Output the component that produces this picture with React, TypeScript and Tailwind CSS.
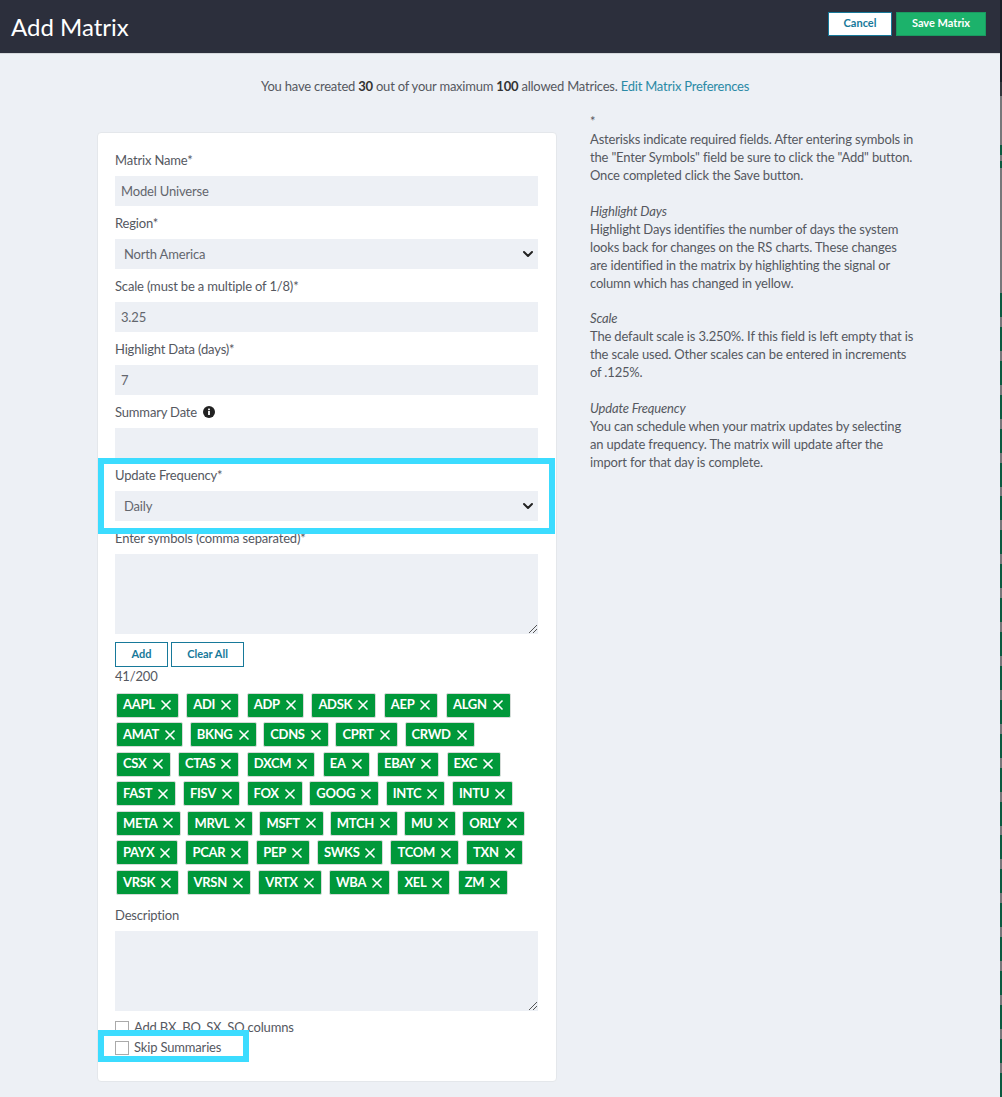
import React from 'react';
import { ChevronDown, X } from 'lucide-react';

const symbolRows = [
  { gap: 'gap-[7.6px]', items: ['AAPL', 'ADI', 'ADP', 'ADSK', 'AEP', 'ALGN'] },
  { gap: 'gap-[6.75px]', items: ['AMAT', 'BKNG', 'CDNS', 'CPRT', 'CRWD'] },
  { gap: 'gap-[7.4px]', items: ['CSX', 'CTAS', 'DXCM', 'EA', 'EBAY', 'EXC'] },
  { gap: 'gap-[6.6px]', items: ['FAST', 'FISV', 'FOX', 'GOOG', 'INTC', 'INTU'] },
  { gap: 'gap-[6px]', items: ['META', 'MRVL', 'MSFT', 'MTCH', 'MU', 'ORLY'] },
  { gap: 'gap-[7px]', items: ['PAYX', 'PCAR', 'PEP', 'SWKS', 'TCOM', 'TXN'] },
  { gap: 'gap-[7.3px]', items: ['VRSK', 'VRSN', 'VRTX', 'WBA', 'XEL', 'ZM'] },
];

function Field({ label, value, select }: { label: React.ReactNode; value?: string; select?: boolean }) {
  return (
    <div className="mb-[9px]">
      <div className="h-[16px] leading-[16px] mb-[8px]">{label}</div>
      <div className={`h-[30px] bg-[#edf0f5] flex items-center justify-between text-[#63666d] ${select ? 'pl-[9px] pr-[2px]' : 'pl-[6px]'}`}>
        <span className="pt-[2px]">{value}</span>
        {select && <ChevronDown size={16} strokeWidth={3} className="text-[#222]" />}
      </div>
    </div>
  );
}

function Chip({ name }: { name: string }) {
  return (
    <span className="h-[25px] pl-[6px] pr-[4px] bg-[#00983a] border border-[#d5dbd8] rounded-[2px] flex items-center gap-[3px] text-white font-bold tracking-[-0.3px]">
      {name}
      <X size={16} strokeWidth={2.5} />
    </span>
  );
}

function Help({ title, children }: { title: string; children: React.ReactNode }) {
  return (
    <div className="mb-[17.5px]">
      <div className="italic">{title}</div>
      <p>{children}</p>
    </div>
  );
}

function ResizeGrip() {
  return (
    <svg className="absolute right-0 bottom-0" width="10" height="10" viewBox="0 0 10 10" stroke="#555" fill="none">
      <path d="M1 9 L9 1 M5 9 L9 5" />
    </svg>
  );
}

export default function App() {
  return (
    <div className="relative w-[1002px] h-[1097px] overflow-hidden bg-[#edf0f5] text-[#55585f] text-[13px] tracking-[-0.17px] font-['Lato',sans-serif]">
      <header className="h-[54px] bg-[#2c2f3c] flex items-center justify-between pl-[11px] pr-[16px] border-b border-[#d5d8dc] tracking-normal">
        <h1 className="text-[24px] text-white">Add Matrix</h1>
        <div className="flex gap-[4px] -mt-[6px]">
          <button className="w-[64px] h-[24px] bg-white border border-[#17799a] text-[#17799a] text-[11px] font-bold">Cancel</button>
          <button className="w-[90px] h-[24px] bg-[#1cb26b] border border-[#1a9a60] text-white text-[11px] font-bold">Save Matrix</button>
        </div>
      </header>

      <div className="h-[78px] pt-[24px] pl-[261px] leading-[17px] tracking-[-0.22px]">
        You have created <b className="text-[#333]">30</b> out of your maximum <b className="text-[#333]">100</b> allowed Matrices.{' '}
        <span className="text-[#2b8aa6]">Edit Matrix Preferences</span>
      </div>

      <div className="flex pl-[97px]">
        <main className="w-[460px] h-[950px] bg-white rounded-[4px] border border-[#e4e7eb] pt-[19px] pl-[17px] pr-[18px]">
          <Field label="Matrix Name*" value="Model Universe" />
          <Field label="Region*" value="North America" select />
          <Field label="Scale (must be a multiple of 1/8)*" value="3.25" />
          <Field label="Highlight Data (days)*" value="7" />
          <Field
            label={
              <span className="flex items-center gap-[6px]">
                Summary Date
                <svg width="12" height="12" viewBox="0 0 12 12">
                  <circle cx="6" cy="6" r="6" fill="#222" />
                  <rect x="5.1" y="5" width="1.8" height="4" fill="#fff" />
                  <rect x="5.1" y="2.6" width="1.8" height="1.6" fill="#fff" />
                </svg>
              </span>
            }
          />
          <Field label="Update Frequency*" value="Daily" select />

          <div className="h-[16px] leading-[16px] mb-[8px]">Enter symbols (comma separated)*</div>
          <div className="relative h-[80px] bg-[#edf0f5]">
            <ResizeGrip />
          </div>
          <div className="flex gap-[3px] mt-[8px] tracking-normal">
            <button className="w-[53px] h-[25px] border border-[#17799a] text-[#17799a] text-[11px] font-bold">Add</button>
            <button className="w-[73px] h-[25px] border border-[#17799a] text-[#17799a] text-[11px] font-bold">Clear All</button>
          </div>
          <div className="h-[17px] mt-px leading-[17px]">41/200</div>

          <div className="flex flex-col gap-[4.6px] mt-[7.5px] ml-px">
            {symbolRows.map((row, i) => (
              <div key={i} className={`flex ${row.gap}`}>
                {row.items.map(s => (
                  <Chip key={s} name={s} />
                ))}
              </div>
            ))}
          </div>

          <div className="h-[16px] leading-[16px] mt-[12px] mb-[8px]">Description</div>
          <div className="relative h-[80px] bg-[#edf0f5]">
            <ResizeGrip />
          </div>
          <label className="flex items-center gap-[5px] mt-[9px] h-[15px]">
            <span className="w-[14px] h-[14px] border border-[#aaa] bg-white" />
            Add BX, BO, SX, SO columns
          </label>
          <label className="flex items-center gap-[5px] mt-[5px] h-[15px]">
            <span className="w-[14px] h-[14px] border border-[#aaa] bg-white" />
            Skip Summaries
          </label>
        </main>

        <aside className="w-[325px] ml-[33px] leading-[18px] -mt-[20px]">
          <div className="mb-[17.5px]">
            <div>*</div>
            <p>
              Asterisks indicate required fields. After entering symbols in the "Enter Symbols" field be sure to click the "Add" button.
              Once completed click the Save button.
            </p>
          </div>
          <Help title="Highlight Days">
            Highlight Days identifies the number of days the system looks back for changes on the RS charts. These changes are identified in the matrix by highlighting the signal or column which has changed in yellow.
          </Help>
          <Help title="Scale">
            The default scale is 3.250%. If this field is left empty that is the scale used. Other scales can be entered in increments of .125%.
          </Help>
          <Help title="Update Frequency">
            You can schedule when your matrix updates by selecting an update frequency. The matrix will update after the import for that day is complete.
          </Help>
        </aside>
      </div>

      {/* sliver of the window behind, at the right edge */}
      <div className="absolute right-0 top-0 w-[2px] h-[1097px] flex flex-col">
        <div className="h-[82px] bg-[#1a1f28]" />
        <div className="h-[14px] bg-[#33363c]" />
        <div className="h-[49px] bg-[#77777a]" />
        <div className="h-[10px] bg-[#0a5a40]" />
        <div className="h-[6px] bg-[#77777a]" />
        <div className="h-[7px] bg-[#0a5a40]" />
        <div className="h-[125px] bg-[#77777a]" />
        <div className="flex-1 bg-[repeating-linear-gradient(to_bottom,#0a5a40_0,#0a5a40_24px,#77777a_24px,#77777a_33.9px)]" />
      </div>

      {/* annotation boxes over the form */}
      <div className="absolute left-[98px] top-[458px] w-[457px] h-[76px] border-[6px] border-[#3cdcff]" />
      <div className="absolute left-[98px] top-[1030px] w-[151px] h-[32px] border-[6px] border-[#3cdcff]" />
    </div>
  );
}
